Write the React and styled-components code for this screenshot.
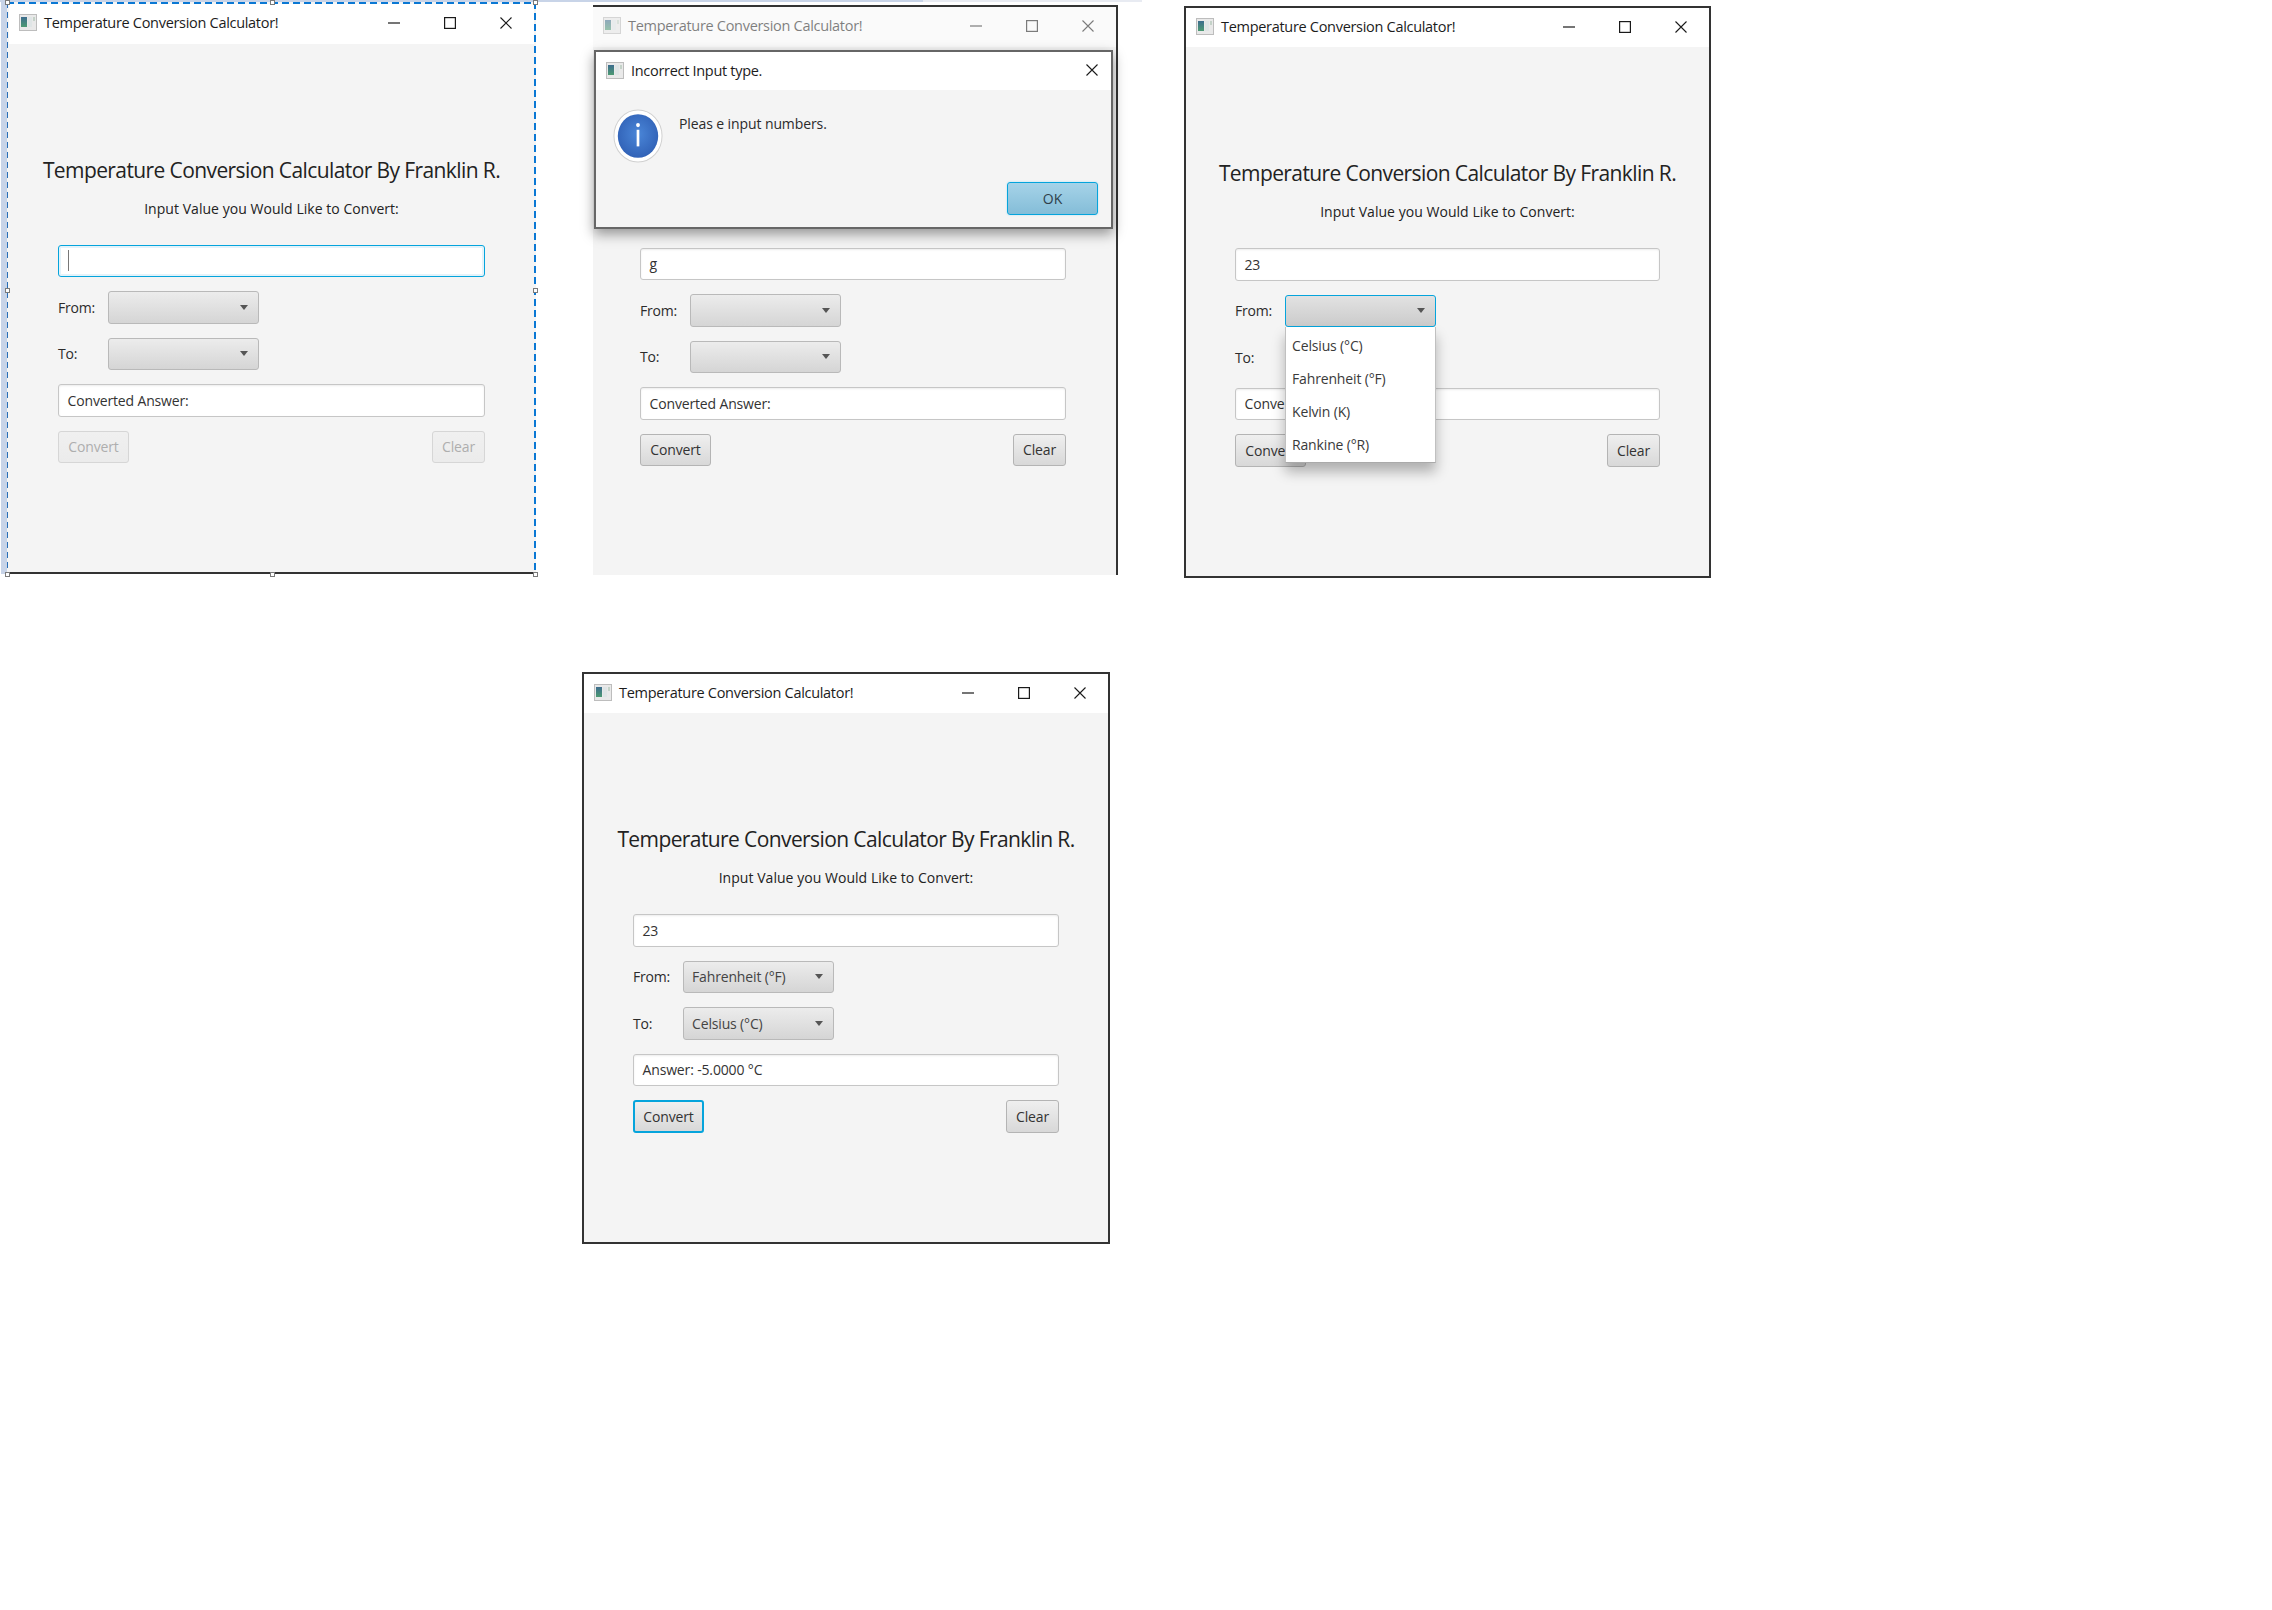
import React from 'react'
import styled, { createGlobalStyle, css } from 'styled-components'

const Global = createGlobalStyle`
html, body { margin: 0; padding: 0; background: #fff; }
* { box-sizing: border-box; }
`

const Desktop = styled.div`
position: relative;
width: 2272px;
height: 1610px;
background: #fff;
overflow: hidden;
font-family: "Open Sans", "Noto Sans", sans-serif;
color: #2b2b2b;
`

const TopStrip = styled.div`
position: absolute;
top: 0;
left: 0;
width: 1142px;
height: 2px;
background: linear-gradient(90deg, #c8d4e8 0, #c8d4e8 923px, #e8ebf2 923px);
`

const SideStrip = styled.div`
position: absolute;
top: 0;
left: 1px;
width: 6px;
height: 574px;
background: #c8d4e8;
`

const Window = styled.div`
position: absolute;
left: ${p => p.$left}px;
top: ${p => p.$top}px;
width: ${p => p.$width || 528}px;
height: ${p => p.$height || 572}px;
display: flex;
flex-direction: column;
background: #f4f4f4;
border: 2px solid #333;
${p => p.$variant === 'selected' && css`
    border-color: transparent transparent #333 transparent;
`}
${p => p.$variant === 'behind' && css`
    border-left: none;
    border-bottom: none;
`}
`

const TitleBar = styled.div`
flex: none;
display: flex;
align-items: center;
height: ${p => p.$height || 38}px;
padding: 0 0 2px ${p => p.$pad || 10}px;
background: #fff;
${p => p.$faded && css`
    opacity: .55;
`}
`

const TitleText = styled.span`
margin-left: 7px;
flex: 1;
font-size: 14.5px;
letter-spacing: -.3px;
color: #1c1c1c;
white-space: nowrap;
`

const Caption = styled.div`
flex: none;
display: flex;
align-items: center;
justify-content: center;
width: ${p => p.$width || 56}px;
height: 100%;
svg { display: block; }
`

const Body = styled.div`
flex: 1;
display: flex;
flex-direction: column;
padding: 111px ${p => p.$right || 49}px 0 ${p => p.$left || 49}px;
`

const Heading = styled.div`
align-self: center;
height: 30px;
line-height: 30px;
font-size: 21px;
letter-spacing: -.6px;
white-space: nowrap;
color: #222;
visibility: ${p => (p.$covered ? 'hidden' : 'visible')};
`

const SubHeading = styled.div`
align-self: center;
margin-top: 13px;
height: 22px;
line-height: 22px;
font-size: 14px;
letter-spacing: .04px;
white-space: nowrap;
color: #222;
visibility: ${p => (p.$covered ? 'hidden' : 'visible')};
`

const Form = styled.div`
margin-top: 25px;
display: flex;
flex-direction: column;
gap: 14px;
`

const Field = styled.div`
position: relative;
height: 32.5px;
display: flex;
align-items: center;
padding-left: 8.5px;
font-size: 14px;
letter-spacing: -.15px;
color: #333;
white-space: nowrap;
background: #fff;
border: 1px solid #c6c6c6;
border-radius: 3px;
box-shadow: inset 0 1px 2px rgba(0, 0, 0, .08);
${p => p.$focused && css`
    border: 1.5px solid #05a4dc;
    box-shadow: inset 0 0 0 2px #e4f3fa;
`}
`

const Caret = styled.span`
width: 1.5px;
height: 21px;
background: #777;
`

const Row = styled.div`
display: flex;
align-items: center;
`

const Label = styled.span`
width: 50px;
font-size: 14px;
letter-spacing: -.2px;
color: #2b2b2b;
`

const ComboWrap = styled.div`
position: relative;
width: 151px;
`

const Combo = styled.div`
height: 32.5px;
display: flex;
align-items: center;
justify-content: space-between;
padding: 0 10px 0 8px;
font-size: 14px;
letter-spacing: -.15px;
color: #444;
white-space: nowrap;
border: 1px solid #b9b9b9;
border-radius: 3px;
background: linear-gradient(#ececec, #d5d5d5);
${p => p.$focused && css`
    border: 1.5px solid #05a4dc;
    background: linear-gradient(#e2e2e2, #cbcbcb);
`}
`

const Arrow = styled.span`
margin-left: auto;
width: 0;
height: 0;
border-left: 4.5px solid transparent;
border-right: 4.5px solid transparent;
border-top: 5px solid #555;
`

const Menu = styled.div`
position: absolute;
z-index: 5;
top: 32.5px;
left: 0;
width: 151px;
background: #fff;
border: 1px solid #c0c0c0;
border-top: none;
border-bottom-color: #aaa;
padding: 1.5px 0;
box-shadow: 0 9px 12px rgba(0, 0, 0, .28);
`

const MenuItem = styled.div`
height: 33.1px;
line-height: 33px;
padding-left: 6px;
font-size: 14px;
letter-spacing: -.15px;
color: #3a3a3a;
white-space: nowrap;
`

const Actions = styled.div`
display: flex;
justify-content: space-between;
`

const Button = styled.div`
height: 32.5px;
width: ${p => p.$width}px;
display: flex;
align-items: center;
justify-content: center;
font-size: 14px;
letter-spacing: -.15px;
color: #333;
border: 1px solid #b4b4b4;
border-radius: 3px;
background: linear-gradient(#efefef, #d8d8d8);
${p => p.$disabled && css`
    color: #aeaeae;
    border-color: #d6d6d6;
    background: linear-gradient(#f0f0f0, #ebebeb);
`}
${p => p.$focused && css`
    border: 2px solid #05a4dc;
`}
`

const Dialog = styled.div`
position: absolute;
z-index: 10;
left: 1px;
top: 43px;
width: 519px;
height: 179px;
display: flex;
flex-direction: column;
background: #f4f4f4;
border: 2px solid #666;
box-shadow: 0 5px 12px rgba(0, 0, 0, .4);
`

const DialogBody = styled.div`
flex: 1;
display: flex;
align-items: flex-start;
padding: 19px 0 0 17px;
`

const DialogText = styled.div`
margin: 5px 0 0 16px;
font-size: 14px;
letter-spacing: -.1px;
color: #2b2b2b;
white-space: pre;
`

const DialogFooter = styled.div`
display: flex;
justify-content: flex-end;
padding: 0 13px 12px 0;
`

const OkButton = styled.div`
width: 91px;
height: 33px;
display: flex;
align-items: center;
justify-content: center;
font-size: 14px;
color: #2f3f4a;
border: 1px solid #05a4dc;
border-radius: 3px;
background: linear-gradient(#a6d3e8, #84bdd8);
box-shadow: 0 0 2px #a8dcf2;
`

const Handle = styled.i`
position: absolute;
left: ${p => p.$x}px;
top: ${p => p.$y}px;
width: 5px;
height: 5px;
background: #fff;
border: 1px solid #7a7a7a;
`

const SelectionFrame = styled.div`
position: absolute;
left: 7px;
top: 2px;
width: 529px;
height: 572px;
pointer-events: none;
background:
    linear-gradient(90deg, #0a78d4 7px, transparent 7px) repeat-x left top / 11px 2px,
    linear-gradient(#0a78d4 7px, transparent 7px) repeat-y right top / 2px 11px,
    linear-gradient(#2a6fb8 6px, transparent 6px) repeat-y left top / 1px 10px;
`

const AppIcon = () => (
    <svg width="18" height="17" viewBox="0 0 18 17">
        <defs>
            <linearGradient id="appGrad" x1="0" y1="0" x2="0" y2="1">
                <stop offset="0" stopColor="#3d6d8e" />
                <stop offset="1" stopColor="#4c9a72" />
            </linearGradient>
        </defs>
        <rect x=".5" y=".5" width="17" height="16" fill="#e9e9e9" stroke="#bdbdbd" />
        <rect x="2" y="3" width="6" height="10" fill="url(#appGrad)" />
        <rect x="9" y="3" width="4" height="10" fill="#dfe5e6" />
        <rect x="14" y="3" width="2" height="4" fill="#c4d2c8" />
    </svg>
)

const MinIcon = () => (
    <svg width="14" height="14" viewBox="0 0 14 14">
        <path d="M1 7h12" stroke="#1a1a1a" strokeWidth="1.2" />
    </svg>
)

const MaxIcon = () => (
    <svg width="14" height="14" viewBox="0 0 14 14">
        <rect x="1.6" y="1.6" width="10.8" height="10.8" fill="none" stroke="#1a1a1a" strokeWidth="1.2" />
    </svg>
)

const CloseIcon = () => (
    <svg width="14" height="14" viewBox="0 0 14 14">
        <path d="M1.5 1.5l11 11M12.5 1.5l-11 11" stroke="#1a1a1a" strokeWidth="1.1" />
    </svg>
)

const InfoIcon = () => (
    <svg width="50" height="54" viewBox="0 0 52 52" preserveAspectRatio="none" style={{ flex: 'none' }}>
        <defs>
            <radialGradient id="infoGrad" cx=".5" cy=".45" r=".6">
                <stop offset="0" stopColor="#4a86d8" />
                <stop offset="1" stopColor="#2f5fb4" />
            </radialGradient>
        </defs>
        <circle cx="26" cy="26" r="25" fill="#fff" stroke="#d0d0d0" strokeWidth="1" />
        <circle cx="26" cy="26" r="21" fill="url(#infoGrad)" />
        <circle cx="26" cy="15.5" r="2" fill="#fff" />
        <rect x="24.6" y="20" width="2.8" height="16" fill="#fff" />
    </svg>
)

function CalcWindow({
    left, top, width, height, variant, titleHeight, padLeft, padRight,
    value, inputFocused, from, to, fromFocused, menu, answer = 'Converted Answer:',
    buttonsDisabled, convertFocused, children,
}) {
    const behind = variant === 'behind'
    return (
        <Window $left={left} $top={top} $width={width} $height={height} $variant={variant}>
            <TitleBar $height={titleHeight} $faded={behind}>
                <AppIcon />
                <TitleText>Temperature Conversion Calculator!</TitleText>
                <Caption><MinIcon /></Caption>
                <Caption><MaxIcon /></Caption>
                <Caption><CloseIcon /></Caption>
            </TitleBar>
            <Body $left={padLeft} $right={padRight}>
                <Heading $covered={behind}>Temperature Conversion Calculator By Franklin R.</Heading>
                <SubHeading $covered={behind}>Input Value you Would Like to Convert:</SubHeading>
                <Form>
                    <Field $focused={inputFocused}>{inputFocused ? <Caret /> : value}</Field>
                    <Row>
                        <Label>From:</Label>
                        <ComboWrap>
                            <Combo $focused={fromFocused}>{from}<Arrow /></Combo>
                            {menu && (
                                <Menu>
                                    {menu.map(item => <MenuItem key={item}>{item}</MenuItem>)}
                                </Menu>
                            )}
                        </ComboWrap>
                    </Row>
                    <Row>
                        <Label>To:</Label>
                        <ComboWrap>
                            <Combo>{to}<Arrow /></Combo>
                        </ComboWrap>
                    </Row>
                    <Field>{answer}</Field>
                    <Actions>
                        <Button $width={71} $disabled={buttonsDisabled} $focused={convertFocused}>Convert</Button>
                        <Button $width={53} $disabled={buttonsDisabled}>Clear</Button>
                    </Actions>
                </Form>
            </Body>
            {children}
        </Window>
    )
}

const units = ['Celsius (°C)', 'Fahrenheit (°F)', 'Kelvin (K)', 'Rankine (°R)']

export default function App() {
    return (
        <Desktop>
            <Global />
            <TopStrip />
            <SideStrip />
            <CalcWindow left={7} top={2} width={529} variant="selected" titleHeight={39.5} value="" inputFocused buttonsDisabled />
            <SelectionFrame />
            <Handle $x={5} $y={0} />
            <Handle $x={270} $y={0} />
            <Handle $x={533} $y={0} />
            <Handle $x={5} $y={288} />
            <Handle $x={533} $y={288} />
            <Handle $x={5} $y={572} />
            <Handle $x={270} $y={572} />
            <Handle $x={533} $y={572} />

            <CalcWindow left={593} top={5} width={525} height={570} variant="behind" titleHeight={39.5} padLeft={47} padRight={50} value="g">
                <Dialog>
                    <TitleBar $height={38} $pad={10}>
                        <AppIcon />
                        <TitleText>Incorrect Input type.</TitleText>
                        <Caption $width={38}><CloseIcon /></Caption>
                    </TitleBar>
                    <DialogBody>
                        <InfoIcon />
                        <DialogText>Pleas e input numbers.</DialogText>
                    </DialogBody>
                    <DialogFooter>
                        <OkButton>OK</OkButton>
                    </DialogFooter>
                </Dialog>
            </CalcWindow>

            <CalcWindow left={1184} top={6} width={527} titleHeight={39} value="23" fromFocused menu={units} />

            <CalcWindow left={582} top={672} width={528} height={572} titleHeight={39} value="23" from="Fahrenheit (°F)" to="Celsius (°C)" answer="Answer: -5.0000 °C" convertFocused />
        </Desktop>
    )
}
